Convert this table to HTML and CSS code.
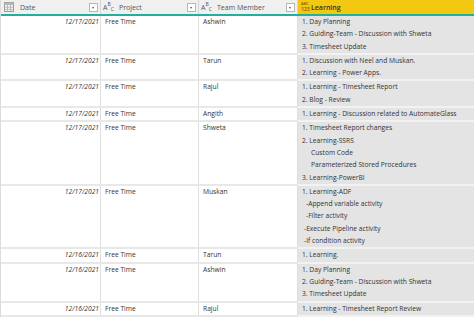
FILE: index.html
```
<!doctype html>
<html lang="en">
<head>
    <meta charset="UTF-8">
    <title>Timesheet - Power Query</title>
    <link rel="stylesheet" href="styles.css">
</head>
<body>
    <div class="grid">
        <div class="head">
            <div class="hcell">
                <svg class="ico" viewBox="0 0 10 10" width="10" height="10">
                    <rect x="0.5" y="0.5" width="9" height="9" fill="#f4f4f4" stroke="#9a9a9a"/>
                    <rect x="0.5" y="0.5" width="9" height="2.5" fill="#b5b5b5"/>
                    <path d="M3.5 3v6.5M6.5 3v6.5M0.5 5.2h9M0.5 7.4h9" stroke="#b0b0b0" stroke-width="0.8"/>
                </svg>
                <span class="hname">Date</span>
                <span class="dd"></span>
            </div>
            <div class="hcell">
                <span class="abc">A<sup>B</sup><sub>C</sub></span>
                <span class="hname">Project</span>
                <span class="dd"></span>
            </div>
            <div class="hcell">
                <span class="abc">A<sup>B</sup><sub>C</sub></span>
                <span class="hname">Team Member</span>
                <span class="dd"></span>
            </div>
            <div class="hcell sel">
                <span class="any"><span class="any-t">ABC</span><span class="any-b">123</span></span>
                <span class="hname">Learning</span>
            </div>
        </div>

        <div class="row">
            <div class="date">12/17/2021</div>
            <div class="txt">Free Time</div>
            <div class="txt">Ashwin</div>
            <div class="learn">
                <div>1. Day Planning</div>
                <div>2. Guiding-Team - Discussion with Shweta</div>
                <div>3. Timesheet Update</div>
            </div>
        </div>
        <div class="row">
            <div class="date">12/17/2021</div>
            <div class="txt">Free Time</div>
            <div class="txt">Tarun</div>
            <div class="learn">
                <div>1. Discussion with Neel and Muskan.</div>
                <div>2. Learning - Power Apps.</div>
            </div>
        </div>
        <div class="row">
            <div class="date">12/17/2021</div>
            <div class="txt">Free Time</div>
            <div class="txt">Rajul</div>
            <div class="learn">
                <div>1. Learning - Timesheet Report</div>
                <div>2. Blog - Review</div>
            </div>
        </div>
        <div class="row">
            <div class="date">12/17/2021</div>
            <div class="txt">Free Time</div>
            <div class="txt">Angith</div>
            <div class="learn">
                <div>1. Learning - Discussion related to AutomateGlass</div>
            </div>
        </div>
        <div class="row">
            <div class="date">12/17/2021</div>
            <div class="txt">Free Time</div>
            <div class="txt">Shweta</div>
            <div class="learn">
                <div>1. Timesheet Report changes</div>
                <div>2. Learning-SSRS</div>
                <div class="in2">Custom Code</div>
                <div class="in2">Parameterized Stored Procedures</div>
                <div>3. Learning-PowerBI</div>
            </div>
        </div>
        <div class="row">
            <div class="date">12/17/2021</div>
            <div class="txt">Free Time</div>
            <div class="txt">Muskan</div>
            <div class="learn">
                <div>1. Learning-ADF</div>
                <div class="in1">-Append variable activity</div>
                <div class="in1">-Filter activity</div>
                <div class="in0">-Execute Pipeline activity</div>
                <div class="in0">-If condition activity</div>
            </div>
        </div>
        <div class="row">
            <div class="date">12/16/2021</div>
            <div class="txt">Free Time</div>
            <div class="txt">Tarun</div>
            <div class="learn">
                <div>1. Learning.</div>
            </div>
        </div>
        <div class="row">
            <div class="date">12/16/2021</div>
            <div class="txt">Free Time</div>
            <div class="txt">Ashwin</div>
            <div class="learn">
                <div>1. Day Planning</div>
                <div>2. Guiding-Team - Discussion with Shweta</div>
                <div>3. Timesheet Update</div>
            </div>
        </div>
        <div class="row">
            <div class="date">12/16/2021</div>
            <div class="txt">Free Time</div>
            <div class="txt">Rajul</div>
            <div class="learn">
                <div>1. Learning - Timesheet Report Review</div>
            </div>
        </div>
    </div>
</body>
</html>
```

FILE: styles.css
```
body {
    margin: 0;
    background: #fff;
    font-family: "Open Sans", "Noto Sans", sans-serif;
    font-size: 6.7px;
    color: #333;
    overflow: hidden;
}
.grid {
    width: 474px;
    border-left: 1px solid #dcdcdc;
    box-sizing: border-box;
}
.head, .row {
    display: grid;
    grid-template-columns: 100px 98px 99px 1fr;
}
.head {
    height: 14px;
    background: #f0f0f0;
    border-bottom: 2px solid #22b09c;
}
.hcell {
    display: flex;
    align-items: center;
    gap: 4px;
    padding: 0 2px;
    border-right: 1px solid #d6d6d6;
    color: #555;
    font-size: 7px;
}
.hcell.sel {
    background: #f2c811;
    border-right: none;
    color: #333;
    font-weight: 600;
    gap: 2px;
}
.hname {
    flex: 1;
}
.ico {
    flex: none;
    margin-left: 1px;
    margin-right: 2px;
}
.abc {
    display: inline-flex;
    align-items: center;
    width: 12px;
    font-size: 7px;
    color: #555;
    line-height: 1;
}
.abc sup, .abc sub {
    font-size: 5px;
    line-height: 1;
}
.abc sup {
    margin-top: -5px;
}
.abc sub {
    margin-top: 4px;
}
.any {
    display: flex;
    flex-direction: column;
    width: 8px;
    color: #8a5a00;
    font-weight: 600;
    margin-left: 1px;
}
.any-t {
    font-size: 4px;
    line-height: 5.5px;
    letter-spacing: -0.2px;
}
.any-b {
    font-size: 5.4px;
    line-height: 7.4px;
    letter-spacing: -0.2px;
}
.dd {
    width: 7px;
    height: 7px;
    border: 1px solid #b8b8b8;
    background: #fff;
    position: relative;
    flex: none;
}
.dd::after {
    content: "";
    position: absolute;
    left: 2px;
    top: 3px;
    border-left: 1.5px solid transparent;
    border-right: 1.5px solid transparent;
    border-top: 2px solid #555;
}
.row {
    border-bottom: 2px solid #e8e8e8;
    line-height: 12.3px;
}
.row > div {
    border-right: 1px solid #dedede;
    white-space: nowrap;
}
.date {
    text-align: right;
    font-style: italic;
    padding-right: 1px;
}
.txt {
    padding-left: 4px;
}
.row .learn {
    background: #e4e4e4;
    border-right: none;
    padding-left: 4px;
    margin-bottom: -2px;
    border-bottom: 2px solid #f2f2f2;
}
.in0 {
    padding-left: 2px;
}
.in1 {
    padding-left: 4px;
}
.in2 {
    padding-left: 9px;
}
```
